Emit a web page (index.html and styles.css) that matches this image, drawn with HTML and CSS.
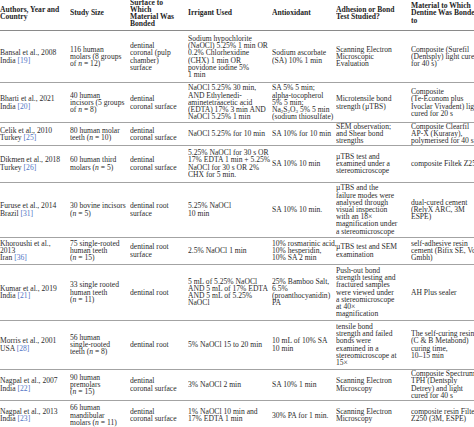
FILE: index.html
```html
<!DOCTYPE html>
<html>
<head>
<meta charset="utf-8">
<link rel="stylesheet" href="styles.css">
</head>
<body>
<table class="tbl">
  <colgroup>
    <col class="c1"><col class="c2"><col class="c3"><col class="c4"><col class="c5"><col class="c6"><col class="c7">
  </colgroup>
  <thead>
    <tr class="r-head">
      <th>Authors, Year and<br>Country</th>
      <th>Study Size</th>
      <th>Surface to<br>Which<br>Material Was<br>Bonded</th>
      <th>Irrigant Used</th>
      <th>Antioxidant</th>
      <th>Adhesion or Bond<br>Test Studied?</th>
      <th>Material to Which<br>Dentine Was Bonded<br>to</th>
    </tr>
  </thead>
  <tbody>
    <tr class="r-bansal">
      <td>Bansal et al., 2008<br>India <a>[19]</a></td>
      <td>116 human<br>molars (8 groups<br>of <i>n</i> = 12)</td>
      <td>dentinal<br>coronal (pulp<br>chamber)<br>surface</td>
      <td>Sodium hypochlorite<br>(NaOCl) 5.25% 1 min OR<br>0.2% Chlorhexidine<br>(CHX) 1 min OR<br>povidone iodine 5%<br>1 min</td>
      <td>Sodium ascorbate<br>(SA) 10% 1 min</td>
      <td>Scanning Electron<br>Microscopic<br>Evaluation</td>
      <td>Composite (Surefil<br>(Dentsply) light cured<br>for 40 s)</td>
    </tr>
    <tr class="r-bharti">
      <td>Bharti et al., 2021<br>India <a>[20]</a></td>
      <td>40 human<br>incisors (5 groups<br>of <i>n</i> = 8)</td>
      <td>dentinal<br>coronal surface</td>
      <td>NaOCl 5.25% 30 min,<br>AND Ethylenedi-<br>aminetetraacetic acid<br>(EDTA) 17% 3 min AND<br>NaOCl 5.25% 1 min</td>
      <td>SA 5% 5 min;<br>alpha-tocopherol<br>5% 5 min;<br>Na<sub>2</sub>S<sub>2</sub>O<sub>3</sub> 5% 5 min<br>(sodium thiosulfate)</td>
      <td>Microtensile bond<br>strength (µTBS)</td>
      <td>Composite<br>(Te-Econom plus<br>Ivoclar Vivadent) light<br>cured for 20 s</td>
    </tr>
    <tr class="r-celik">
      <td>Celik et al., 2010<br>Turkey <a>[25]</a></td>
      <td>80 human molar<br>teeth (<i>n</i> = 10)</td>
      <td>dentinal<br>coronal surface</td>
      <td>NaOCl 5.25% for 10 min</td>
      <td>SA 10% for 10 min</td>
      <td>SEM observation;<br>and Shear bond<br>strengths</td>
      <td>Composite Clearfil<br>AP-X (Kuraray),<br>polymerised for 40 s</td>
    </tr>
    <tr class="r-dikmen">
      <td>Dikmen et al., 2018<br>Turkey <a>[26]</a></td>
      <td>60 human third<br>molars (<i>n</i> = 5)</td>
      <td>dentinal<br>coronal surface</td>
      <td>5.25% NaOCl for 30 s OR<br>17% EDTA 1 min + 5.25%<br>NaOCl for 30 s OR 2%<br>CHX for 5 min.</td>
      <td>SA 10% 10 min</td>
      <td>µTBS test and<br>examined under a<br>stereomicroscope</td>
      <td>composite Filtek Z250</td>
    </tr>
    <tr class="r-furuse">
      <td>Furuse et al., 2014<br>Brazil <a>[31]</a></td>
      <td>30 bovine incisors<br>(<i>n</i> = 5)</td>
      <td>dentinal root<br>surface</td>
      <td>5.25% NaOCl<br>10 min</td>
      <td>SA 10% 10 min.</td>
      <td>µTBS and the<br>failure modes were<br>analysed through<br>visual inspection<br>with an 18×<br>magnification under<br>a stereomicroscope</td>
      <td>dual-cured cement<br>(RelyX ARC, 3M<br>ESPE)</td>
    </tr>
    <tr class="r-khor">
      <td>Khoroushi et al.,<br>2013<br>Iran <a>[36]</a></td>
      <td>75 single-rooted<br>human teeth<br>(<i>n</i> = 15)</td>
      <td>dentinal root<br>surface</td>
      <td>2.5% NaOCl 1 min</td>
      <td>10% rosmarinic acid,<br>10% hesperidin,<br>10% SA 2 min</td>
      <td>µTBS test and SEM<br>examination</td>
      <td>self-adhesive resin<br>cement (Bifix SE, Voco<br>Gmbh)</td>
    </tr>
    <tr class="r-kumar">
      <td>Kumar et al., 2019<br>India <a>[21]</a></td>
      <td>33 single rooted<br>human teeth<br>(<i>n</i> = 11)</td>
      <td>dentinal root</td>
      <td>5 mL of 5.25% NaOCl<br>AND 5 mL of 17% EDTA<br>AND 5 mL of 5.25%<br>NaOCl</td>
      <td>25% Bamboo Salt,<br>6.5%<br>(proanthocyanidin)<br>PA</td>
      <td>Push-out bond<br>strength testing and<br>fractured samples<br>were viewed under<br>a stereomicroscope<br>at 40×<br>magnification</td>
      <td>AH Plus sealer</td>
    </tr>
    <tr class="r-morris">
      <td>Morris et al., 2001<br>USA <a>[28]</a></td>
      <td>56 human<br>single-rooted<br>teeth (<i>n</i> = 8)</td>
      <td>dentinal root</td>
      <td>5% NaOCl 15 to 20 min</td>
      <td>10 mL of 10% SA<br>10 min</td>
      <td>tensile bond<br>strength and failed<br>bonds were<br>examined in a<br>stereomicroscope at<br>15×</td>
      <td>The self-curing resin<br>(C &amp; B Metabond)<br>curing time,<br>10–15 min</td>
    </tr>
    <tr class="r-nag07">
      <td>Nagpal et al., 2007<br>India <a>[22]</a></td>
      <td>90 human<br>premolars<br>(<i>n</i> = 15)</td>
      <td>dentinal<br>coronal surface</td>
      <td>3% NaOCl 2 min</td>
      <td>SA 10% 1 min</td>
      <td>Scanning Electron<br>Microscopy</td>
      <td>Composite Spectrum<br>TPH (Dentsply<br>Detrey) and light<br>cured for 40 s</td>
    </tr>
    <tr class="r-nag13">
      <td>Nagpal et al., 2013<br>India <a>[23]</a></td>
      <td>66 human<br>mandibular<br>molars (<i>n</i> = 11)</td>
      <td>dentinal<br>coronal surface</td>
      <td>1% NaOCl 10 min and<br>17% EDTA 1 min</td>
      <td>30% PA for 1 min.</td>
      <td>Scanning Electron<br>Microscopy</td>
      <td>composite resin Filtek<br>Z250 (3M, ESPE)</td>
    </tr>
  </tbody>
</table>
</body>
</html>
```

FILE: styles.css
```css
html, body {
  margin: 0;
  padding: 0;
  background: #ffffff;
  overflow: hidden;
  width: 474px;
  height: 427px;
}

.tbl {
  border-collapse: separate;
  border-spacing: 0;
  table-layout: fixed;
  width: 520px;
  margin-top: -4px;
  font-family: "Liberation Serif", "Times New Roman", serif;
  font-size: 7.6px;
  line-height: 7.2px;
  color: #2b2b2b;
}

.c1 { width: 70px; }
.c2 { width: 60px; }
.c3 { width: 58px; }
.c4 { width: 84px; }
.c5 { width: 64px; }
.c6 { width: 75px; }
.c7 { width: 109px; }

.tbl th,
.tbl td {
  padding: 0;
  text-align: left;
  vertical-align: middle;
  white-space: nowrap;
  overflow: hidden;
  border-bottom: 1px solid #a3a3a3;
}

.tbl th {
  font-weight: bold;
  color: #1e1e1e;
  border-bottom-color: #8a8a8a;
}

.tbl a {
  color: #4f74c4;
}

.tbl sub {
  font-size: 5px;
  line-height: 0;
  vertical-align: -1px;
}

.r-head { height: 35px; }
.r-bansal { height: 52px; }
.r-bharti { height: 40px; }
.r-celik { height: 22px; }
.r-dikmen { height: 37px; }
.r-furuse { height: 55px; }
.r-khor { height: 27px; }
.r-kumar { height: 56px; }
.r-morris { height: 49px; }
.r-nag07 { height: 31px; }
.r-nag13 { height: 30px; }
```
